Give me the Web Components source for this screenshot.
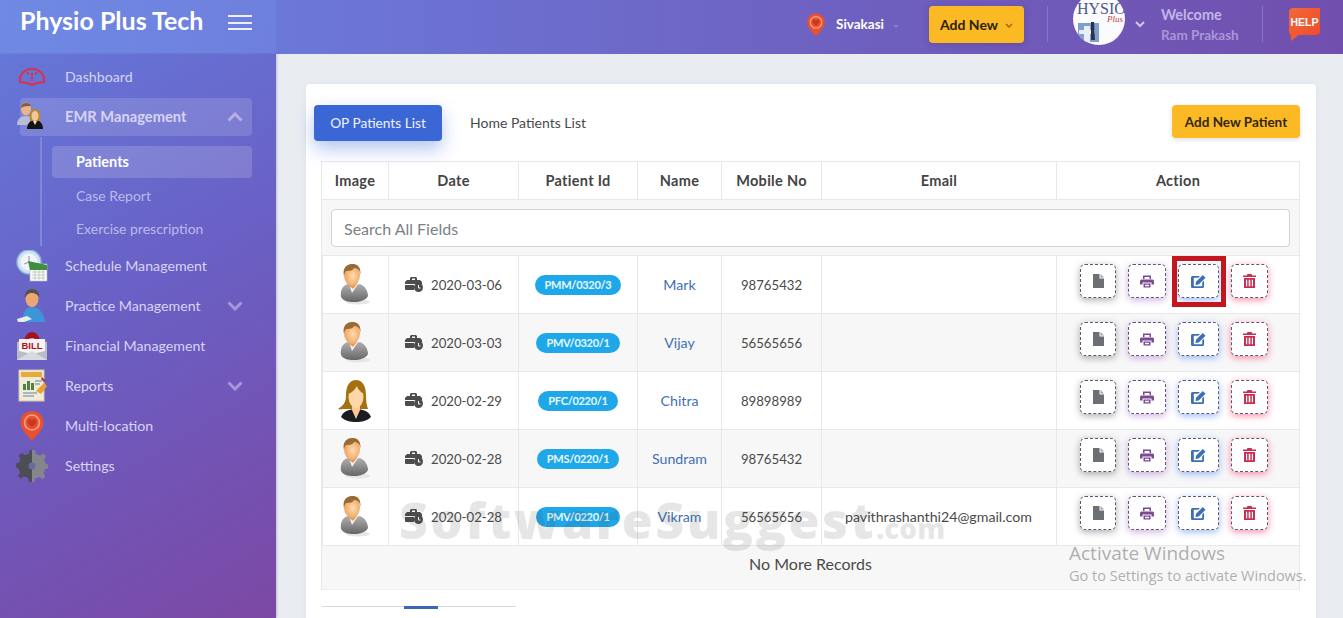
<!DOCTYPE html>
<html>
<head>
<meta charset="utf-8">
<title>Physio Plus Tech</title>
<style>
  html, body { margin: 0; height: 100%; overflow: hidden; }
  body { font-family: "Lato", "Open Sans", sans-serif; color: #4a4a4a; }
</style>
</head>
<body>
<app-shell>
  <top-bar slot="top"></top-bar>
  <side-nav slot="side">
    <nav-item icon="dash">Dashboard</nav-item>
    <nav-item icon="emr" state="open">EMR Management</nav-item>
    <sub-menu>
      <sub-item active>Patients</sub-item>
      <sub-item>Case Report</sub-item>
      <sub-item>Exercise prescription</sub-item>
    </sub-menu>
    <nav-item icon="schedule">Schedule Management</nav-item>
    <nav-item icon="practice" state="closed">Practice Management</nav-item>
    <nav-item icon="bill">Financial Management</nav-item>
    <nav-item icon="reports" state="closed">Reports</nav-item>
    <nav-item icon="pin">Multi-location</nav-item>
    <nav-item icon="gear">Settings</nav-item>
  </side-nav>
  <patients-card slot="main">
    <patient-row kind="m" date="2020-03-06" pid="PMM/0320/3" name="Mark" mobile="98765432" marked></patient-row>
    <patient-row kind="m" date="2020-03-03" pid="PMV/0320/1" name="Vijay" mobile="56565656" striped></patient-row>
    <patient-row kind="f" date="2020-02-29" pid="PFC/0220/1" name="Chitra" mobile="89898989"></patient-row>
    <patient-row kind="m" date="2020-02-28" pid="PMS/0220/1" name="Sundram" mobile="98765432" striped></patient-row>
    <patient-row kind="m" date="2020-02-28" pid="PMV/0220/1" name="Vikram" mobile="56565656" email="pavithrashanthi24@gmail.com"></patient-row>
  </patients-card>
  <page-marks slot="marks"></page-marks>
</app-shell>

<script>
const COLS = "66px 130px 119px 84px 100px 235px 243px";

const PIN = `<svg viewBox="0 0 26 32" width="100%" height="100%">
  <path d="M13 1C6 1 1.500 6 1.500 12.500 1.500 19 8 25 13 31 18 25 24.500 19 24.500 12.500 24.500 6 20 1 13 1Z" fill="#e8502f"/>
  <circle cx="13" cy="12.500" r="7.500" fill="none" stroke="#f7a08a" stroke-width="1.600"/>
  <path d="M13 17c-3-2.200-4.500-3.700-4.500-5.500 0-2.500 3.300-3 4.500-1 1.200-2 4.500-1.500 4.500 1 0 1.800-1.500 3.300-4.500 5.500Z" fill="#c9371f"/>
</svg>`;

const NAV_ICONS = {
  dash: `<svg viewBox="0 0 28 20" width="28" height="20">
    <path d="M2 15C1 7 7 2 14 2s13 5 12 13l-8 1-4 2-4-2Z" fill="none" stroke="#d63350" stroke-width="2.200" stroke-linejoin="round"/>
    <path d="M14 6v8M9 5l2 3M19 5l-2 3" stroke="#d63350" stroke-width="1.600"/>
  </svg>`,
  emr: `<svg viewBox="0 0 32 32" width="32" height="32">
    <path d="M1 24c0-6 4-9 9-9s8 3 8 9Z" fill="#b9bdd6"/>
    <ellipse cx="10" cy="8" rx="5" ry="6.500" fill="#eab38c"/>
    <path d="M5 7c0-5 8-7 10-2-3 0-7 0-10 2Z" fill="#8a5a36"/>
    <path d="M11 28c0-6 4-9 8-9s8 3 8 9Z" fill="#141414"/>
    <path d="M14 20c-1-6 0-12 5-12s6 6 5 12Z" fill="#b98a28"/>
    <ellipse cx="19" cy="15" rx="3.500" ry="5" fill="#f3c79c"/>
    <path d="M17 20h4l-2 4Z" fill="#f5e3d0"/>
  </svg>`,
  schedule: `<svg viewBox="0 0 32 32" width="32" height="32">
    <circle cx="13" cy="12" r="12" fill="#cfe3f5" stroke="#8fb4d8" stroke-width="1.500"/>
    <circle cx="13" cy="12" r="8.500" fill="#f3f4f8"/>
    <path d="M13 6v6l-5 2" stroke="#9aa0b2" stroke-width="1.200" fill="none"/>
    <rect x="14" y="14" width="17" height="17" fill="#fafafa" stroke="#bcbcbc" stroke-width=".6"/>
    <path d="M12 11l19 4v5H14Z" fill="#3f8f3e"/>
    <path d="M16 22h13M16 25h13M16 28h13M19 20v10M23 20v10M27 20v10" stroke="#b9c4b9" stroke-width=".8"/>
  </svg>`,
  practice: `<svg viewBox="0 0 32 34" width="32" height="34">
    <path d="M6 33c1-9 3-15 10-15s12 6 13 15Z" fill="#3d95d8"/>
    <ellipse cx="16" cy="10" rx="6.500" ry="8" fill="#eaa773"/>
    <path d="M9 9c-1-7 4-9 7-9s8 2 7 8c-2-3-4-4-7-4s-5 1-7 5Z" fill="#55504a"/>
    <path d="M1 30l10-3 5 3-8 3H2Z" fill="#e9edf2"/>
  </svg>`,
  bill: `<svg viewBox="0 0 32 30" width="32" height="30">
    <path d="M8 12C8 5 12 1 16 1s8 4 8 11Z" fill="#a5141c"/>
    <path d="M1 11l15-4 15 4v18H1Z" fill="#b9bcc4"/>
    <path d="M3 8h26v12l-13 3-13-3Z" fill="#f4f4f4"/>
    <text x="16" y="18" text-anchor="middle" font-family="Liberation Sans" font-size="9.500" font-weight="700" fill="#b3121b">BILL</text>
    <path d="M1 29l15-9 15 9Z" fill="#d8dae0"/>
  </svg>`,
  reports: `<svg viewBox="0 0 30 34" width="30" height="34">
    <rect x="2" y="1" width="25" height="31" fill="#f2ecd7" stroke="#cfc7a9"/>
    <rect x="4" y="3" width="21" height="5" fill="#e6aa3a"/>
    <path d="M6 21v-6h3v6ZM10 21v-9h3v9ZM14 21v-7h3v7Z" fill="#50824a"/>
    <path d="M18 12h7M18 15h5M6 24h14M6 27h11" stroke="#8fa7c0" stroke-width="1.300"/>
    <path d="M19 22l8-8 3 3-6 8Z" fill="#e8a232"/>
    <path d="M25 8l4 4-2 1-3-3Z" fill="#b8302a"/>
  </svg>`,
  pin: `<div style="width:26px;height:32px">${PIN}</div>`,
  gear: `<svg viewBox="0 0 32 32" width="32" height="32">
    <path d="M16 0v32h-3l-1-4-4-1.500-3.500 2L2 26l2-3.500L2.500 18.500l-2.500-1v-4l3-.8L4.500 9l-2-3.500L5.500 3l3.500 2L13 3.500 13.500 0Z" fill="#4d4d55"/>
    <path d="M16 0h3l1 4 4 1.500 3.500-2L30 6l-2 3.500 1.500 4 2.500 1v4l-3 .8L27.500 23l2 3.500-3 2.500-3.500-2-4 1.500-.5 3.500h-2.500Z" fill="#85858c"/>
    <circle cx="16" cy="16" r="3.500" fill="#6a6a9c"/>
  </svg>`
};

class AppShell extends HTMLElement {
  connectedCallback() {
    this.attachShadow({ mode: "open" }).innerHTML = `
      <style>
        :host {
          display: grid;
          grid-template-columns: 276px 1fr;
          grid-template-rows: 54px 1fr;
          width: 1343px;
          height: 618px;
          position: relative;
          overflow: hidden;
          background: #e9edf2;
        }
        .top { grid-column: 1 / 3; display: block; }
        .main { padding: 30px 27px 0 30px; min-width: 0; }
      </style>
      <div class="top"><slot name="top"></slot></div>
      <slot name="side"></slot>
      <div class="main"><slot name="main"></slot></div>
      <slot name="marks"></slot>
    `;
  }
}

class TopBar extends HTMLElement {
  connectedCallback() {
    this.attachShadow({ mode: "open" }).innerHTML = `
      <style>
        :host {
          display: flex;
          align-items: center;
          height: 54px;
          color: #fff;
          background: linear-gradient(90deg, #6b78d8 276px, #6e62c2 800px, #714fae 1343px);
        }
        .brand {
          flex: 0 0 276px;
          box-sizing: border-box;
          height: 54px;
          padding: 0 24px 14px 20px;
          display: flex;
          align-items: center;
          justify-content: space-between;
          background: linear-gradient(100deg, #6f8ae4, #6e7fdc);
          font: 700 25px "Lato", sans-serif;
        }
        .burger { width: 24px; height: 11px; margin-top: 5px; border-top: 2px solid #eef; border-bottom: 2px solid #eef; position: relative; }
        .burger::after { content: ""; position: absolute; left: 0; right: 0; top: 4.500px; height: 2px; background: #eef; }
        .right { flex: 1; display: flex; align-items: center; padding-left: 530px; }
        .pin { width: 20px; height: 26px; margin: -5px 10px 0 0; }
        .city { font: 700 13.500px "Lato", sans-serif; width: 48px; margin-bottom: 6px; }
        .caret { width: 0; height: 0; border: 3px solid transparent; border-top: 3px solid #8a80c8; margin: 2px 30px 0 9px; }
        .add {
          width: 95px; height: 37px; margin-top: -5px; box-sizing: border-box;
          background: #fbb924; border-radius: 4px; color: #2b2210;
          font: 700 14px "Lato", sans-serif;
          display: flex; align-items: center; justify-content: center; gap: 7px;
          box-shadow: 0 2px 6px rgba(80,40,120,.3);
        }
        .add svg { margin-top: 2px; }
        .rule { width: 1px; height: 36px; background: #8577c6; margin-top: -6px; }
        .logo { margin: -16px 10px 0 25px; width: 52px; height: 52px; }
        .hello { font: 700 14.500px/20px "Lato", sans-serif; color: #c2b5e8; margin: -4px 23px 0 16px; width: 78px; white-space: nowrap; }
        .hello div + div { color: #a997d8; font-size: 13.500px; }
        .help { width: 33px; height: 33px; margin: -6px 0 0 25px; }
      </style>
      <div class="brand"><span>Physio Plus Tech</span><div class="burger"></div></div>
      <div class="right">
        <div class="pin">${PIN}</div>
        <div class="city">Sivakasi</div>
        <div class="caret"></div>
        <div class="add">Add New
          <svg width="8" height="6" viewBox="0 0 8 6"><path d="M1 1l3 3 3-3" fill="none" stroke="#9a6a10" stroke-width="1.500"/></svg>
        </div>
        <div class="rule" style="margin-left:23px"></div>
        <svg class="logo" viewBox="0 0 52 52">
          <defs><clipPath id="disc"><circle cx="26" cy="26" r="26"/></clipPath></defs>
          <g clip-path="url(#disc)">
            <rect width="52" height="52" fill="#fbfbfd"/>
            <text x="4" y="21" font-family="Liberation Serif" font-size="16" fill="#4c5a88">HYSIO</text>
            <text x="34" y="29" font-family="Liberation Serif" font-style="italic" font-size="9" fill="#c53a4a">Plus</text>
            <rect x="5" y="30" width="21" height="19" fill="#7b9fce"/>
            <path d="M11 33h6v4h5v4h-5v8h-6v-8H6v-4h5Z" fill="#e9eff7"/>
            <path d="M18 29h3l1 18h-4Z" fill="#2c3345"/>
          </g>
        </svg>
        <svg width="10" height="7" viewBox="0 0 10 7" style="margin:-6px 0 0"><path d="M1 1l4 4 4-4" fill="none" stroke="#cfc6ee" stroke-width="2"/></svg>
        <div class="hello"><div>Welcome</div><div>Ram Prakash</div></div>
        <div class="rule"></div>
        <svg class="help" viewBox="0 0 33 33">
          <defs><linearGradient id="hb" x1="0" y1="0" x2="1" y2="1"><stop offset="0" stop-color="#f2683a"/><stop offset="1" stop-color="#ee4a28"/></linearGradient></defs>
          <path d="M5 0h27v24q0 3-4 3H11l-8 6V27Q1 26 1 22V5q0-5 4-5Z" fill="url(#hb)"/>
          <text x="16.500" y="18" text-anchor="middle" font-family="Liberation Sans" font-weight="700" font-size="10.500" fill="#fff">HELP</text>
        </svg>
      </div>
    `;
  }
}

class SideNav extends HTMLElement {
  connectedCallback() {
    this.attachShadow({ mode: "open" }).innerHTML = `
      <style>
        :host {
          display: block;
          box-sizing: border-box;
          height: 564px;
          padding-top: 3px;
          background: linear-gradient(150deg, #6577d8 0%, #6a5fc4 45%, #7c48a4 100%);
          box-shadow: 1px 0 2px rgba(60,40,120,.25);
        }
      </style>
      <slot></slot>
    `;
  }
}

class NavItem extends HTMLElement {
  connectedCallback() {
    const state = this.getAttribute("state");
    const chevron = state
      ? `<svg class="chev" width="16" height="10" viewBox="0 0 16 10"><path d="${state === "open" ? "M1.500 8.500L8 2l6.500 6.500" : "M1.500 1.500L8 8l6.500-6.500"}" fill="none" stroke="${state === "open" ? "#b6aee6" : "#a795dc"}" stroke-width="3"/></svg>`
      : "";
    this.attachShadow({ mode: "open" }).innerHTML = `
      <style>
        :host {
          display: block;
          position: relative;
          box-sizing: border-box;
          height: 40px;
          padding: 1px 24px 1px 20px;
          font: 14.200px "Lato", sans-serif;
          color: #d7d4f4;
        }
        .row {
          position: relative;
          height: 38px;
          padding-left: 45px;
          display: flex;
          align-items: center;
          justify-content: space-between;
          border-radius: 4px;
        }
        .label { margin-bottom: 2px; }
        :host([state="open"]) .row { background: rgba(255,255,255,.14); font-weight: 700; font-size: 14.700px; }
        .icon {
          position: absolute;
          left: -5px;
          top: 50%;
          transform: translateY(-50%);
          width: 34px;
          display: flex;
          justify-content: center;
        }
        .chev { margin-right: 9px; }
      </style>
      <div class="row">
        <span class="icon">${NAV_ICONS[this.getAttribute("icon")] || ""}</span>
        <span class="label"><slot></slot></span>
        ${chevron}
      </div>
    `;
  }
}

class SubMenu extends HTMLElement {
  connectedCallback() {
    this.attachShadow({ mode: "open" }).innerHTML = `
      <style>
        :host {
          display: block;
          box-sizing: border-box;
          height: 109px;
          margin: 0 24px 0 40px;
          padding: 9px 0 0 10px;
          border-left: 2px solid #7d88dc;
        }
      </style>
      <slot></slot>
    `;
  }
}

class SubItem extends HTMLElement {
  connectedCallback() {
    this.attachShadow({ mode: "open" }).innerHTML = `
      <style>
        :host {
          display: flex;
          align-items: center;
          height: 33px;
          box-sizing: border-box;
          padding: 0 0 2px 24px;
          font: 14px "Lato", sans-serif;
          color: #bcb9ec;
        }
        :host([active]) {
          height: 32px;
          margin-bottom: 2px;
          background: rgba(255,255,255,.16);
          border-radius: 4px;
          color: #fff;
          font-weight: 700;
          font-size: 14.500px;
        }
      </style>
      <slot></slot>
    `;
  }
}

class PatientsCard extends HTMLElement {
  connectedCallback() {
    this.attachShadow({ mode: "open" }).innerHTML = `
      <style>
        :host {
          display: block;
          box-sizing: border-box;
          height: 560px;
          padding: 21px 16px 0 8px;
          background: #fff;
          border-radius: 4px;
          box-shadow: 0 0 6px rgba(40,50,80,.06);
          font: 14px "Lato", sans-serif;
          color: #4a4a4a;
        }
        .tabs { display: flex; align-items: flex-start; height: 56px; }
        .tab { height: 36px; box-sizing: border-box; display: flex; align-items: center; padding: 0 28px 2px; }
        .tab.on {
          width: 128px; justify-content: center; padding: 0 0 2px;
          background: #3b67d6; color: #eef2ff; border-radius: 4px; font-size: 13.700px;
          box-shadow: 0 8px 18px rgba(59,103,214,.38);
        }
        .addnew {
          margin-left: auto; width: 128px; height: 33px;
          display: flex; align-items: center; justify-content: center;
          background: #fbb924; border-radius: 4px; color: #33270f; font-weight: 700; font-size: 13.500px;
          box-shadow: 0 2px 5px rgba(0,0,0,.12);
        }
        .table { margin-left: 7px; border-left: 1px solid #e6e8ec; border-right: 1px solid #e6e8ec; width: 979px; box-sizing: border-box; }
        .head {
          display: grid; grid-template-columns: ${COLS}; height: 39px;
          border-top: 1px solid #e6e8ec; border-bottom: 1px solid #e6e8ec; box-sizing: border-box;
          font-weight: 700; font-size: 14.500px; letter-spacing: .3px; color: #444;
        }
        .head div { display: flex; align-items: center; justify-content: center; border-left: 1px solid #e6e8ec; }
        .head div:first-child { border-left: 0; }
        .search { height: 56px; box-sizing: border-box; padding: 9px; background: #f7f7f8; border-bottom: 1px solid #e6e8ec; }
        .field {
          height: 38px; box-sizing: border-box; border: 1px solid #ced4da; border-radius: 4px; background: #fff;
          display: flex; align-items: center; padding: 1px 0 0 12px; font-size: 16px; color: #7c8186;
        }
        .none { height: 44px; box-sizing: border-box; padding-bottom: 8px; background: #f7f7f8; display: flex; align-items: center; justify-content: center; font-size: 16px; border-bottom: 1px solid #eceef0; }
        .pages { display: flex; margin: 16px 0 0 8px; height: 10px; }
        .pages span { height: 1px; background: #d5d8dc; }
        .pages .cur { height: 3px; background: #3a66b8; }
      </style>
      <div class="tabs">
        <div class="tab on">OP Patients List</div>
        <div class="tab">Home Patients List</div>
        <div class="addnew">Add New Patient</div>
      </div>
      <div class="table">
        <div class="head">
          <div>Image</div><div>Date</div><div>Patient Id</div><div>Name</div><div>Mobile No</div><div>Email</div><div>Action</div>
        </div>
        <div class="search"><div class="field">Search All Fields</div></div>
        <slot></slot>
        <div class="none">No More Records</div>
      </div>
      <div class="pages">
        <span style="width:82px"></span><span class="cur" style="width:34px"></span><span style="width:78px"></span>
      </div>
    `;
  }
}

class PersonAvatar extends HTMLElement {
  connectedCallback() {
    const male = `<svg viewBox="0 0 36 42" width="36" height="42">
      <defs>
        <radialGradient id="skin" cx=".55" cy=".55" r=".7"><stop offset="0" stop-color="#ffdcae"/><stop offset="1" stop-color="#e8914a"/></radialGradient>
        <linearGradient id="suit" x1="0" y1="0" x2="0" y2="1"><stop offset="0" stop-color="#b0b0b0"/><stop offset="1" stop-color="#666"/></linearGradient>
      </defs>
      <ellipse cx="20" cy="38" rx="12" ry="2.500" fill="#e6e6e6"/>
      <path d="M3 33c-1-7 2-12 7-13l6 1 6-1c5 2 8 7 8 12-2 4-8 6-14 6S5 37 3 33Z" fill="url(#suit)"/>
      <path d="M11 20l3 9 6-9Z" fill="#f5f5f5"/>
      <path d="M10 15h9v5l-4 5-5-4Z" fill="#e9994f"/>
      <ellipse cx="14" cy="11" rx="8" ry="11" fill="url(#skin)"/>
      <path d="M6 12C4 4 9 0 14 0s9 2 8.500 11C22 6 20 4 16 4c-1 3-6 3-8 3-1 1-2 3-2 5Z" fill="#9a6a34"/>
    </svg>`;
    const female = `<svg viewBox="0 0 36 42" width="36" height="42">
      <path d="M8 16C8 5 12 0 18 0s10 5 10 16c0 6 1 10 2 13H6c-1 0-5 1-6 0 5-3 8-7 8-13Z" fill="#a5700f"/>
      <path d="M3 37c2-6 9-8 15-8s13 2 15 8c-4 4-9 5-15 5S7 41 3 37Z" fill="#1b1c22"/>
      <path d="M14 24h8v6l-4 9-4-9Z" fill="#fbcb97"/>
      <ellipse cx="18" cy="17" rx="7.500" ry="11" fill="#fdd7a9"/>
      <path d="M10 14c3-1 7-4 9-8 1 4 4 6 7 8l-1-8-7-3-7 3Z" fill="#a5700f"/>
    </svg>`;
    this.attachShadow({ mode: "open" }).innerHTML = `
      <style>:host { display: block; width: 36px; height: 42px; }</style>
      ${this.getAttribute("kind") === "f" ? female : male}
    `;
  }
}

class ActionButton extends HTMLElement {
  connectedCallback() {
    const kinds = {
      doc: { w: 36, c: "#6c6f74", glow: "rgba(70,70,70,.45)", iw: 11, ih: 14, vb: "0 0 11 14",
        svg: `<path d="M0 0h6.500v4.500H11V14H0Z" fill="currentColor"/><path d="M7.500 0L11 3.500H7.500Z" fill="currentColor" opacity=".65"/>` },
      print: { w: 38, c: "#7b4a94", glow: "rgba(150,80,190,.45)", iw: 14, ih: 13, vb: "0 0 14 12",
        svg: `<path d="M3 0h8v3.500H9.500V1.500h-5v2H3ZM1.500 4h11q1.500 0 1.500 1.500V9h-2.500V7h-9v2H0V5.500Q0 4 1.500 4ZM3.500 8h7v4h-7Zm1.500 1.300v1.400h4V9.300Z" fill="currentColor" fill-rule="evenodd"/>` },
      edit: { w: 41, c: "#3c6fb8", glow: "rgba(60,120,245,.5)", iw: 15, ih: 14, vb: "0 0 15 14",
        svg: `<path d="M1.500 2H9L7.200 3.800H2.800v8.400h8.400V8.400L13 6.500v6q0 1.500-1.500 1.500h-10Q0 14 0 12.500v-9Q0 2 1.500 2Z" fill="currentColor"/><path d="M5 7.800L11.800 1l2.700 2.700-6.800 6.800L4.500 11Z" fill="currentColor"/>` },
      trash: { w: 37, c: "#c92f52", glow: "rgba(245,50,95,.55)", iw: 13, ih: 14, vb: "0 0 13 14",
        svg: `<path d="M4.500 0h4l.8 1.500H13V3H0V1.500h3.700ZM1 4h11v10H1Zm2 1.800v6.400h1.200V5.800Zm2.700 0v6.400h1.600V5.800Zm3.100 0v6.400H10V5.800Z" fill="currentColor" fill-rule="evenodd"/>` }
    };
    const k = kinds[this.getAttribute("kind")];
    this.attachShadow({ mode: "open" }).innerHTML = `
      <style>
        :host {
          display: flex; align-items: center; justify-content: center;
          box-sizing: border-box;
          width: ${k.w}px; height: 34px;
          border: 1px dashed #5b5870;
          border-radius: 5px;
          color: ${k.c};
          background: #fff;
          box-shadow: 0 2px 7px ${k.glow};
        }
      </style>
      <svg viewBox="${k.vb}" width="${k.iw}" height="${k.ih}">${k.svg}</svg>
    `;
  }
}

class PatientRow extends HTMLElement {
  connectedCallback() {
    const a = (n) => this.getAttribute(n) || "";
    this.attachShadow({ mode: "open" }).innerHTML = `
      <style>
        :host {
          display: grid;
          grid-template-columns: ${COLS};
          height: 58px;
          box-sizing: border-box;
          border-bottom: 1px solid #e6e8ec;
          font: 14.200px "Lato", sans-serif;
          color: #4a4a4a;
        }
        :host([striped]) { background: #f7f7f8; }
        .c { display: flex; align-items: center; justify-content: center; border-left: 1px solid #e6e8ec; }
        .c:first-child { border-left: 0; }
        .num { font-size: 13.200px; }
        .date { gap: 8px; }
        .badge {
          background: #1ea8ea; color: #e8f8ff; font-weight: 700; font-size: 11px; letter-spacing: -.3px;
          height: 20px; padding: 0 10px; border-radius: 10px; display: flex; align-items: center;
        }
        .name { color: #3f6fb5; }
        .email { justify-content: flex-start; padding-left: 23px; }
        .acts { gap: 12px; justify-content: flex-start; padding: 0 0 7px 23px; position: relative; }
        .mark {
          position: absolute; left: 115px; top: 0; width: 54px; height: 51px; box-sizing: border-box;
          border: 5px solid #c4161c; pointer-events: none;
        }
      </style>
      <div class="c"><person-avatar kind="${a("kind")}"></person-avatar></div>
      <div class="c date num">
        <svg width="18" height="15" viewBox="0 0 18 15">
          <path d="M6 0h5l1 1v2h3l2 2v2H0V5l2-2h3V1Zm1 1.500V3h3V1.500Z" fill="#4c4c4c" fill-rule="evenodd"/>
          <path d="M0 8h9v5H1q-1 0-1-1Z" fill="#4c4c4c"/>
          <circle cx="13.500" cy="10.500" r="4.500" fill="#4c4c4c"/>
          <path d="M13.500 8v3h2" stroke="#fff" stroke-width="1" fill="none"/>
        </svg>
        <span>${a("date")}</span>
      </div>
      <div class="c"><span class="badge">${a("pid")}</span></div>
      <div class="c name">${a("name")}</div>
      <div class="c num">${a("mobile")}</div>
      <div class="c email">${a("email")}</div>
      <div class="c acts">
        <action-button kind="doc"></action-button>
        <action-button kind="print"></action-button>
        <action-button kind="edit"></action-button>
        <action-button kind="trash"></action-button>
        ${this.hasAttribute("marked") ? '<div class="mark"></div>' : ""}
      </div>
    `;
  }
}

class PageMarks extends HTMLElement {
  connectedCallback() {
    this.attachShadow({ mode: "open" }).innerHTML = `
      <style>
        :host { position: absolute; inset: 0; pointer-events: none; display: block; }
        .ss { position: absolute; left: 399px; top: 486px; font: 800 50px "Open Sans", sans-serif; letter-spacing: 2.600px; color: rgba(60,60,60,.13); white-space: nowrap; }
        .ss small { font-size: 28px; letter-spacing: 0; }
        .win { position: absolute; left: 1069px; top: 540px; color: rgba(110,110,110,.55); font: 19px "Open Sans", sans-serif; white-space: nowrap; }
        .win div + div { font-size: 14.500px; margin-top: 0; }
      </style>
      <div class="ss">SoftwareSuggest<small>.com</small></div>
      <div class="win"><div>Activate Windows</div><div>Go to Settings to activate Windows.</div></div>
    `;
  }
}

customElements.define("app-shell", AppShell);
customElements.define("top-bar", TopBar);
customElements.define("side-nav", SideNav);
customElements.define("nav-item", NavItem);
customElements.define("sub-menu", SubMenu);
customElements.define("sub-item", SubItem);
customElements.define("patients-card", PatientsCard);
customElements.define("person-avatar", PersonAvatar);
customElements.define("action-button", ActionButton);
customElements.define("patient-row", PatientRow);
customElements.define("page-marks", PageMarks);
</script>
</body>
</html>
